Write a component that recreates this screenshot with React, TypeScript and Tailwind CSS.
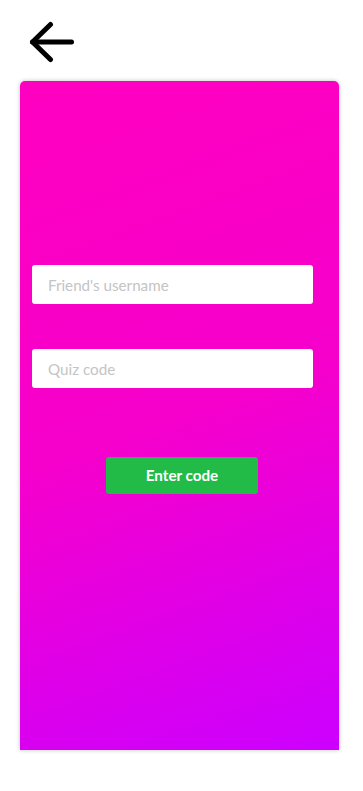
export default function App() {
  return (
    <div className="min-h-[791px] w-full bg-white font-['Lato','Liberation_Sans',sans-serif]">
      {/* back arrow */}
      <div className="h-[81px] pl-[29px] pt-[21px]">
        <svg width="46" height="42" viewBox="0 0 46 42" fill="none" stroke="#000" strokeWidth="5" strokeLinecap="round" strokeLinejoin="round">
          <path d="M3.5 21 H42.5" />
          <path d="M21.5 3.5 L3.5 21 L21.5 38.5" />
        </svg>
      </div>

      {/* card */}
      <div className="mx-[20px] w-[319px] h-[669px] rounded-t-[5px] bg-linear-[160deg] from-[#ff00c0] via-[#f600cc] to-[#cc00ff] shadow-[0_0_4px_rgba(0,0,0,0.25)] pl-[12px] pt-[184px]">
        <div className="flex flex-col gap-[45px]">
          <input
            placeholder="Friend's username"
            className="w-[281px] h-[39px] rounded-[3px] bg-white px-[16px] text-[15.2px] text-gray-700 placeholder:text-[#c4c4c4] outline-none"
          />
          <input
            placeholder="Quiz code"
            className="w-[281px] h-[39px] rounded-[3px] bg-white px-[16px] text-[15.2px] text-gray-700 placeholder:text-[#c4c4c4] outline-none"
          />
        </div>
        <div className="mt-[69px] pl-[74px]">
          <button className="w-[152px] h-[37px] rounded-[3px] bg-[#22bb48] text-white text-[15.2px] font-bold">
            Enter code
          </button>
        </div>
      </div>
    </div>
  )
}
